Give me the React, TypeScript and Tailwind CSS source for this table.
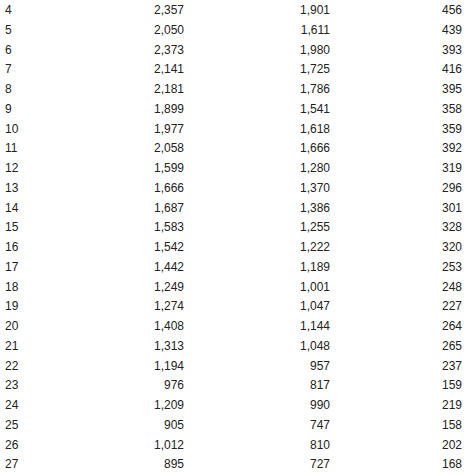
const rows: [number, string, string, string][] = [
  [4, '2,357', '1,901', '456'],
  [5, '2,050', '1,611', '439'],
  [6, '2,373', '1,980', '393'],
  [7, '2,141', '1,725', '416'],
  [8, '2,181', '1,786', '395'],
  [9, '1,899', '1,541', '358'],
  [10, '1,977', '1,618', '359'],
  [11, '2,058', '1,666', '392'],
  [12, '1,599', '1,280', '319'],
  [13, '1,666', '1,370', '296'],
  [14, '1,687', '1,386', '301'],
  [15, '1,583', '1,255', '328'],
  [16, '1,542', '1,222', '320'],
  [17, '1,442', '1,189', '253'],
  [18, '1,249', '1,001', '248'],
  [19, '1,274', '1,047', '227'],
  [20, '1,408', '1,144', '264'],
  [21, '1,313', '1,048', '265'],
  [22, '1,194', '957', '237'],
  [23, '976', '817', '159'],
  [24, '1,209', '990', '219'],
  [25, '905', '747', '158'],
  [26, '1,012', '810', '202'],
  [27, '895', '727', '168'],
];

export default function App() {
  return (
    <div className="h-[474px] w-[474px] overflow-hidden bg-white pl-[5px] pt-[1px] font-['Liberation_Sans',Arial,sans-serif] text-[12px] text-[#222]">
      {rows.map(([n, a, b, c]) => (
        <div key={n} className="grid h-[19.75px] grid-cols-[40px_139px_146px_132px] items-center leading-[19.75px]">
          <div>{n}</div>
          <div className="text-right">{a}</div>
          <div className="text-right">{b}</div>
          <div className="text-right">{c}</div>
        </div>
      ))}
    </div>
  );
}
